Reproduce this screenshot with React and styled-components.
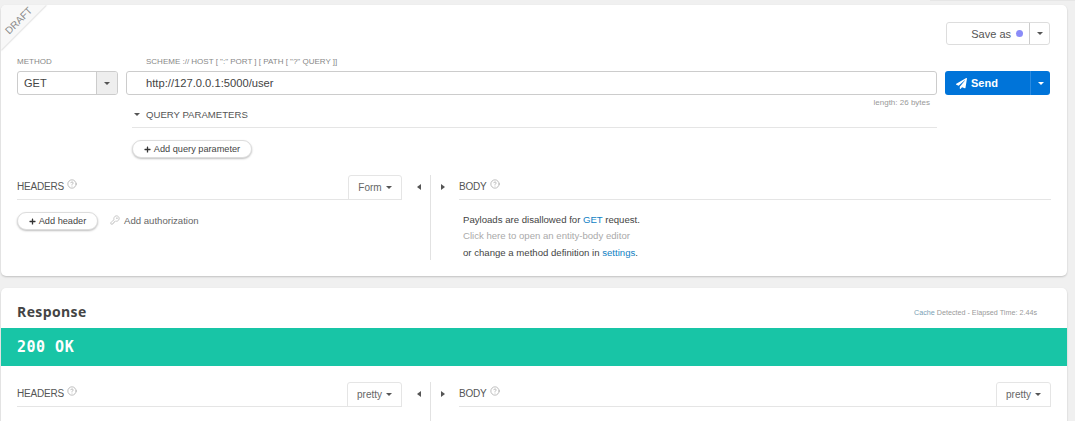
import React from 'react';
import styled, { createGlobalStyle } from 'styled-components';
import { FaPaperPlane, FaPlus } from 'react-icons/fa';
import { CircleHelp, KeyRound } from 'lucide-react';

const GlobalStyle = createGlobalStyle`
  html, body { margin: 0; padding: 0; background: #f0f0f0; overflow: hidden; }
  body { font-family: "Liberation Sans", Arial, sans-serif; color: #444; }
`;

const Page = styled.div`
  width: 1075px;
  height: 421px;
  box-sizing: border-box;
  padding: 5px 8px 0 1px;
  overflow: hidden;
  display: flex;
  flex-direction: column;
  gap: 12px;
  background: linear-gradient(#e6e6e6, #e6e6e6) right top / 145px 1px no-repeat;
`;
const Card = styled.section`
  position: relative;
  flex: none;
  background: #fff;
  border-radius: 5px;
  box-shadow: 0 1px 2px rgba(0, 0, 0, 0.2);
  height: ${(p) => p.$height}px;
  overflow: hidden;
`;
const DraftCorner = styled.div`
  position: absolute;
  left: -32px;
  top: -32px;
  width: 64px;
  height: 64px;
  background: #f8f8f8;
  box-shadow: 0 0 2px rgba(0, 0, 0, 0.3);
  transform: rotate(45deg);
`;
const DraftText = styled.span`
  position: absolute;
  left: 1px;
  top: 10px;
  font-size: 10px;
  line-height: 11px;
  color: #888;
  transform: rotate(-45deg);
`;

const SaveRow = styled.div`
  display: flex;
  justify-content: flex-end;
  padding: 17px 17px 0 0;
`;
const SaveGroup = styled.div`
  display: flex;
  width: 104px;
  height: 23px;
  border: 1px solid #ddd;
  border-radius: 3px;
  box-sizing: border-box;
  font-size: 11px;
  color: #555;
`;
const SaveLabel = styled.div`
  flex: 1;
  display: flex;
  align-items: center;
  justify-content: flex-end;
  gap: 5px;
  padding-right: 6px;
`;
const Dot = styled.i`
  width: 7px;
  height: 7px;
  border-radius: 50%;
  background: #8a8cf8;
`;
const CaretCell = styled.div`
  width: ${(p) => p.$width || 20}px;
  box-sizing: border-box;
  display: flex;
  align-items: center;
  justify-content: center;
  background: ${(p) => p.$bg || 'transparent'};
  border-left: 1px solid ${(p) => p.$line || '#ccc'};
`;
const Caret = styled.i`
  display: inline-block;
  width: 0;
  height: 0;
  border-left: ${(p) => p.$size || 3}px solid transparent;
  border-right: ${(p) => p.$size || 3}px solid transparent;
  border-top: ${(p) => p.$size || 3}px solid ${(p) => p.$color || '#555'};
`;

const RequestGrid = styled.div`
  display: grid;
  grid-template-columns: 101px 811px 105px;
  column-gap: 8px;
  padding: 11px 0 0 16px;
`;
const FieldLabel = styled.div`
  font-size: 8px;
  line-height: 11px;
  height: 11px;
  margin-bottom: 4px;
  color: #888;
  padding-left: ${(p) => p.$indent || 0}px;
`;
const MethodSelect = styled.div`
  display: flex;
  height: 24px;
  box-sizing: border-box;
  border: 1px solid #ccc;
  border-radius: 3px;
  overflow: hidden;
  font-size: 11px;
`;
const MethodValue = styled.div`
  flex: 1;
  padding-left: 6px;
  line-height: 22px;
  color: #444;
`;
const UrlInput = styled.div`
  height: 24px;
  box-sizing: border-box;
  border: 1px solid #ccc;
  border-radius: 3px;
  padding-left: 19px;
  font-size: 11.2px;
  line-height: 22px;
  color: #444;
`;
const SendGroup = styled.div`
  display: flex;
  height: 24px;
  margin-top: 15px;
  border-radius: 3px;
  overflow: hidden;
  background: #0074d9;
  color: #fff;
  font-size: 11px;
  font-weight: bold;
`;
const SendLabel = styled.div`
  flex: 1;
  display: flex;
  align-items: center;
  gap: 4px;
  padding-left: 11px;
`;
const UrlMeta = styled.div`
  font-size: 8px;
  line-height: 10px;
  text-align: right;
  color: #999;
  padding: 3px 7px 0 0;
`;

const QueryBlock = styled.div`
  margin-left: 131px;
  width: 805px;
`;
const QueryHeader = styled.div`
  display: flex;
  align-items: center;
  gap: 6px;
  height: 20px;
  box-sizing: border-box;
  padding: 0 0 7px 2px;
  font-size: 9.6px;
  color: #555;
  border-bottom: 1px solid #e5e5e5;
`;
const PillButton = styled.button`
  display: inline-flex;
  align-items: center;
  justify-content: center;
  gap: 3px;
  height: 18px;
  padding: 0;
  width: ${(p) => p.$width}px;
  border: 1px solid #ddd;
  border-radius: 9px;
  background: #fff;
  box-shadow: 0 1px 2px rgba(0, 0, 0, 0.25);
  font-family: inherit;
  font-size: 9.2px;
  color: #444;
  svg { color: #333; }
`;
const QueryAction = styled.div`
  display: flex;
  padding-top: 12px;
`;

const Columns = styled.div`
  display: grid;
  grid-template-columns: 385px 57px 592px;
  padding-left: 16px;
  margin-top: ${(p) => p.$top}px;
`;
const PaneHeader = styled.div`
  display: flex;
  justify-content: space-between;
  align-items: flex-end;
  height: 25px;
  box-sizing: border-box;
  border-bottom: 1px solid #e5e5e5;
`;
const PaneTitle = styled.div`
  display: flex;
  align-items: flex-start;
  gap: 3px;
  font-size: 10px;
  letter-spacing: -0.2px;
  line-height: 11px;
  color: #555;
  padding-bottom: 7px;
  svg { color: #999; margin-top: -2px; }
`;
const Tab = styled.div`
  display: flex;
  align-items: center;
  justify-content: center;
  gap: 4px;
  width: ${(p) => p.$width}px;
  height: 25px;
  margin-bottom: -1px;
  box-sizing: border-box;
  border: 1px solid #e5e5e5;
  border-radius: 3px 3px 0 0;
  font-size: 10px;
  color: #666;
`;
const Splitter = styled.div`
  display: flex;
  justify-content: center;
  gap: 18px;
  height: ${(p) => p.$height}px;
  padding-top: 9px;
  box-sizing: border-box;
  background: linear-gradient(#e2e2e2, #e2e2e2) center / 1px 100% no-repeat;
`;
const Arrow = styled.i`
  width: 0;
  height: 0;
  margin: 0 1px;
  border-top: 3px solid transparent;
  border-bottom: 3px solid transparent;
  border-left: ${(p) => (p.$dir === 'right' ? '4px solid #555' : 'none')};
  border-right: ${(p) => (p.$dir === 'left' ? '4px solid #555' : 'none')};
`;
const HeaderActions = styled.div`
  display: flex;
  align-items: center;
  gap: 12px;
  padding-top: 12px;
  font-size: 9.6px;
  color: #666;
`;
const AuthLink = styled.span`
  display: inline-flex;
  align-items: center;
  gap: 4px;
  margin-top: -2px;
  svg { color: #aaa; }
`;
const BodyNote = styled.div`
  padding: 12px 0 0 4px;
  font-size: 9.6px;
  line-height: 16.4px;
  color: #444;
`;
const Muted = styled.span`
  color: #aaa;
`;
const LinkText = styled.span`
  color: ${(p) => p.$color || '#0f7fc4'};
`;

const ResponseHead = styled.div`
  display: flex;
  justify-content: space-between;
  align-items: center;
  height: 40px;
  box-sizing: border-box;
  padding: 6px 30px 0 16px;
`;
const ResponseTitle = styled.h2`
  margin: 0;
  font-family: "Open Sans", sans-serif;
  font-size: 14px;
  font-weight: 700;
  letter-spacing: 0.4px;
  color: #444;
`;
const Timing = styled.div`
  font-size: 7.2px;
  color: #999;
  padding-top: 3px;
`;
const StatusBar = styled.div`
  height: 38px;
  line-height: 38px;
  padding-left: 16px;
  background: #18c5a6;
  color: #fff;
  font-family: "DejaVu Sans Mono", monospace;
  font-size: 15px;
  font-weight: bold;
  letter-spacing: 0.5px;
`;

const Help = () => <CircleHelp size={10} strokeWidth={1.5} />;

const PaneHead = ({ title, tab, tabWidth }) => (
  <PaneHeader>
    <PaneTitle>
      {title} <Help />
    </PaneTitle>
    {tab && (
      <Tab $width={tabWidth}>
        {tab} <Caret />
      </Tab>
    )}
  </PaneHeader>
);

const App = () => (
  <>
    <GlobalStyle />
    <Page>
      <Card $height={271}>
        <DraftCorner />
        <DraftText>DRAFT</DraftText>
        <SaveRow>
          <SaveGroup>
            <SaveLabel>
              Save as <Dot />
            </SaveLabel>
            <CaretCell>
              <Caret $size={3.5} />
            </CaretCell>
          </SaveGroup>
        </SaveRow>
        <RequestGrid>
          <div>
            <FieldLabel>METHOD</FieldLabel>
            <MethodSelect>
              <MethodValue>GET</MethodValue>
              <CaretCell $bg="#eee" $width={21}>
                <Caret $size={3.5} />
              </CaretCell>
            </MethodSelect>
          </div>
          <div>
            <FieldLabel $indent={20}>SCHEME :// HOST [ ":" PORT ] [ PATH [ "?" QUERY ]]</FieldLabel>
            <UrlInput>http://127.0.0.1:5000/user</UrlInput>
          </div>
          <SendGroup>
            <SendLabel>
              <FaPaperPlane size={11} /> Send
            </SendLabel>
            <CaretCell $line="#2a8ae0">
              <Caret $color="#fff" $size={3.5} />
            </CaretCell>
          </SendGroup>
        </RequestGrid>
        <QueryBlock>
          <UrlMeta>length: 26 bytes</UrlMeta>
          <QueryHeader>
            <Caret /> QUERY PARAMETERS
          </QueryHeader>
          <QueryAction>
            <PillButton $width={120}>
              <FaPlus size={7} /> Add query parameter
            </PillButton>
          </QueryAction>
        </QueryBlock>
        <Columns $top={17}>
          <div>
            <PaneHead title="HEADERS" tab="Form" tabWidth={54} />
            <HeaderActions>
              <PillButton $width={81}>
                <FaPlus size={7} /> Add header
              </PillButton>
              <AuthLink>
                <KeyRound size={10} strokeWidth={1.5} /> Add authorization
              </AuthLink>
            </HeaderActions>
          </div>
          <Splitter $height={85}>
            <Arrow $dir="left" />
            <Arrow $dir="right" />
          </Splitter>
          <div>
            <PaneHead title="BODY" />
            <BodyNote>
              Payloads are disallowed for <LinkText>GET</LinkText> request.
              <br />
              <Muted>Click here to open an entity-body editor</Muted>
              <br />
              or change a method definition in <LinkText>settings</LinkText>.
            </BodyNote>
          </div>
        </Columns>
      </Card>
      <Card $height={140}>
        <ResponseHead>
          <ResponseTitle>Response</ResponseTitle>
          <Timing>
            <LinkText $color="#7a9fb5">Cache</LinkText> Detected - Elapsed Time: 2.44s
          </Timing>
        </ResponseHead>
        <StatusBar>200 OK</StatusBar>
        <Columns $top={16}>
          <PaneHead title="HEADERS" tab="pretty" tabWidth={55} />
          <Splitter $height={40}>
            <Arrow $dir="left" />
            <Arrow $dir="right" />
          </Splitter>
          <PaneHead title="BODY" tab="pretty" tabWidth={55} />
        </Columns>
      </Card>
    </Page>
  </>
);

export default App;
